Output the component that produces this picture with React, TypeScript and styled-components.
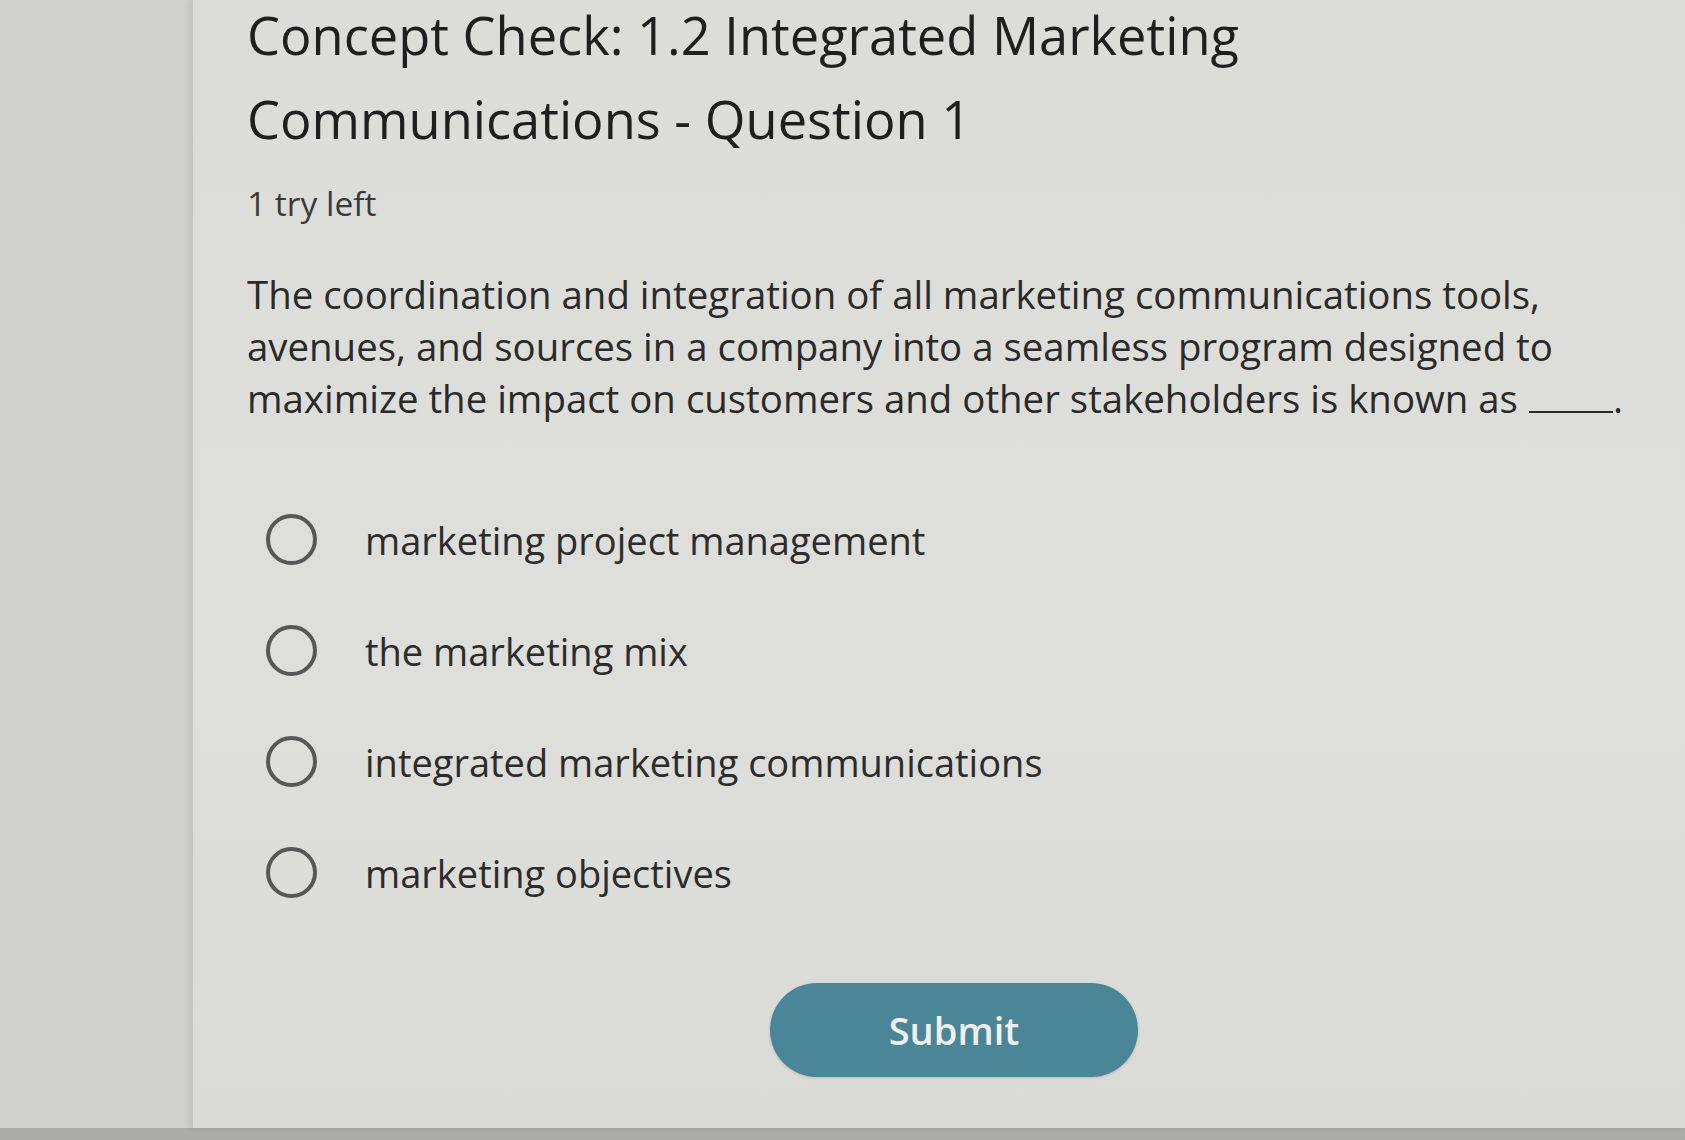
import React, { useState } from 'react';
import styled, { createGlobalStyle } from 'styled-components';

const GlobalStyle = createGlobalStyle`
  html, body {
    margin: 0;
    padding: 0;
    background: #d2d2cf;
    overflow: hidden;
  }
  body {
    font-family: 'Open Sans', 'Noto Sans', sans-serif;
    color: #262626;
  }
`;

const Page = styled.div`
  width: 1685px;
  height: 1140px;
  display: flex;
  flex-direction: column;
  background: linear-gradient(90deg, #d0d0cd 0%, #d7d7d4 100%);
`;

const Frame = styled.div`
  flex: 1;
  display: flex;
  padding-left: 191px;
  border-bottom: 12px solid #acaca9;
`;

const Card = styled.main`
  flex: 1;
  background: linear-gradient(180deg, #dcdcd9 0%, #dededb 60%, #dadad7 100%);
  border-left: 2px solid #c4c4c1;
  box-shadow: -3px 0 6px rgba(0, 0, 0, 0.08);
  padding-left: 54px;
  overflow: hidden;
`;

const Title = styled.h1`
  margin: -7px 0 0;
  font-size: 52.4px;
  line-height: 84px;
  font-weight: 400;
  color: #1f1f1f;
`;

const Tries = styled.div`
  margin-top: 20px;
  font-size: 33.5px;
  line-height: 44px;
  color: #3a3a3a;
`;

const Prompt = styled.p`
  margin: 43px 0 0;
  font-size: 38.4px;
  line-height: 52px;
  color: #2a2a2a;
`;

const Blank = styled.span`
  display: inline-block;
  width: 84px;
  margin-left: 11px;
  border-bottom: 2px solid #2a2a2a;
`;

const Options = styled.div`
  margin-top: 60px;
  display: flex;
  flex-direction: column;
`;

const Option = styled.label`
  height: 111px;
  display: flex;
  align-items: center;
  gap: 48px;
  cursor: pointer;
`;

const Radio = styled.span<{ checked: boolean }>`
  width: 51px;
  height: 51px;
  margin-left: 19px;
  box-sizing: border-box;
  border-radius: 50%;
  border: 4px solid #575757;
  display: flex;
  align-items: center;
  justify-content: center;

  &::after {
    content: '';
    width: 25px;
    height: 25px;
    border-radius: 50%;
    background: #4a8397;
    display: ${p => (p.checked ? 'block' : 'none')};
  }
`;

const OptionText = styled.span`
  font-size: 38px;
  color: #2c2c2c;
`;

const SubmitButton = styled.button`
  margin: 55px 0 0 523px;
  width: 368px;
  height: 94px;
  border: none;
  border-radius: 47px;
  background: #4b8598;
  box-shadow: 0 1px 3px rgba(0, 0, 0, 0.15);
  color: #eef0ef;
  font-family: 'Open Sans', 'Noto Sans', sans-serif;
  font-size: 38px;
  font-weight: 600;
  cursor: pointer;
`;

const choices = [
  'marketing project management',
  'the marketing mix',
  'integrated marketing communications',
  'marketing objectives',
];

const App: React.FC = () => {
  const [selected, setSelected] = useState<number | null>(null);

  return (
    <>
      <GlobalStyle />
      <Page>
        <Frame>
          <Card>
            <Title>
              Concept Check: 1.2 Integrated Marketing
              <br />
              Communications - Question 1
            </Title>
            <Tries>1 try left</Tries>
            <Prompt>
              The coordination and integration of all marketing communications tools,
              <br />
              avenues, and sources in a company into a seamless program designed to
              <br />
              maximize the impact on customers and other stakeholders is known as
              <Blank />.
            </Prompt>
            <Options>
              {choices.map((c, i) => (
                <Option key={c} onClick={() => setSelected(i)}>
                  <Radio checked={selected === i} />
                  <OptionText>{c}</OptionText>
                </Option>
              ))}
            </Options>
            <SubmitButton>Submit</SubmitButton>
          </Card>
        </Frame>
      </Page>
    </>
  );
};

export default App;
